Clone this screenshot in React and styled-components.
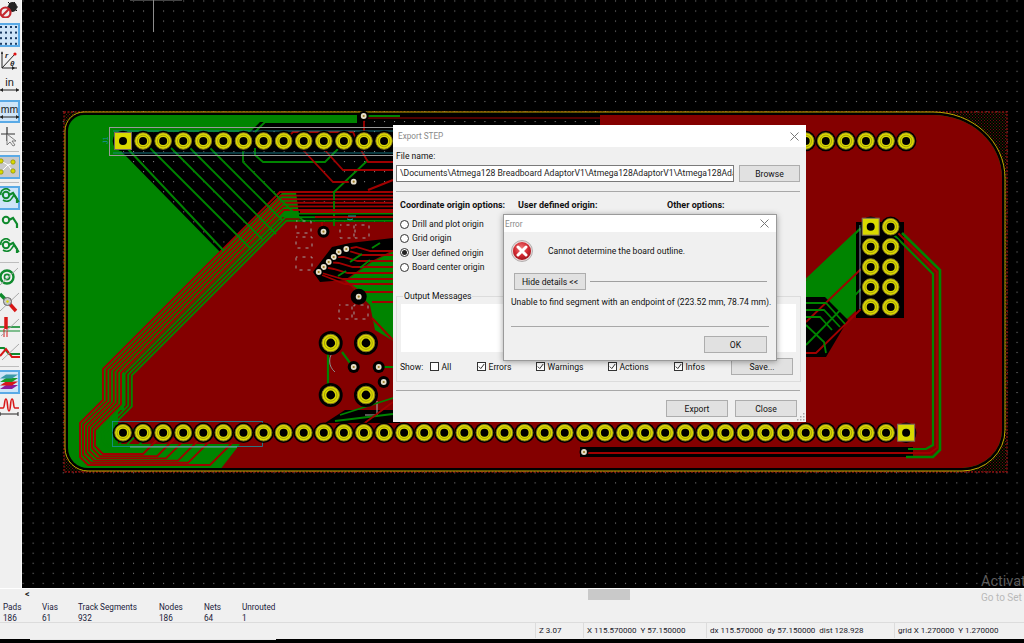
import React from "react";
import styled, { createGlobalStyle, css } from "styled-components";

const Global = createGlobalStyle`
  html, body { margin: 0; padding: 0; background: #000; overflow: hidden; }
  #root { width: 1024px; height: 643px; }
`;
const FONT = `Roboto, "Noto Sans", sans-serif`;

const Page = styled.div`
  position: relative; width: 1024px; height: 643px; overflow: hidden;
  display: flex; flex-direction: column; background: #000;
  font-family: ${FONT}; font-size: 8.6px; color: #111;
`;
const Main = styled.div`display: flex; height: 588px; flex: none;`;
const Toolbar = styled.div`
  width: 21px; flex: none; background: #f0f0f0; border-right: 1px solid #fafafa;
  display: flex; flex-direction: column; overflow: hidden;
`;
const Tool = styled.div`
  box-sizing: border-box; width: 23px; margin-left: -3px; flex: none;
  height: ${p => p.$h}px; margin-top: ${p => p.$gap || 0}px;
  display: flex; align-items: center; justify-content: center;
  ${p => p.$on && css`background: #cfe5f8; border: 2px solid #5aaae6;`}
  svg { display: block; flex: none; }
`;
const ToolSep = styled.div`
  height: 1px; flex: none; background: #bdbdbd; margin: ${p => p.$gap}px 2px 0 0;
`;
const Board = styled.svg`display: block; flex: none;`;

const Bottom = styled.div`
  height: 50px; flex: none; background: #f0f0f0; border-top: 1px solid #fff;
  display: flex; flex-direction: column;
`;
const ScrollRow = styled.div`height: 11px; display: flex; flex: none;`;
const ScrollArrow = styled.span`
  margin-left: 25px; width: 6px; font-size: 9px; line-height: 10px; font-weight: 700; color: #222;
`;
const ScrollThumb = styled.div`margin-left: 557px; width: 42px; background: #c9c9c9;`;
const Stats = styled.div`
  height: 23px; flex: none; display: flex; padding-left: 3px; box-sizing: border-box;
  border-bottom: 1px solid #dcdcdc; font-size: 8.2px;
`;
const Stat = styled.div`
  width: ${p => p.$w}px; flex: none; display: flex; flex-direction: column;
  line-height: 11px; padding-top: 2px; color: #1a1a3a;
`;
const Status = styled.div`
  height: 15px; flex: none; display: flex; line-height: 16px; color: #1a1a2a;
  padding-left: 535px; font-size: 8px;
`;
const StatusCell = styled.div`
  width: ${p => p.$w}px; flex: none; box-sizing: border-box; padding-left: 3px;
  border-left: 1px solid #dcdcdc; white-space: pre;
`;
const Strip = styled.div`height: 4px; flex: none; background: #000;`;
const StripBar = styled.div`margin-left: 30px; width: 246px; height: 1px; background: #e8e8e8;`;

const Watermark = styled.div`
  position: absolute; left: 981px; top: 572px; white-space: nowrap; pointer-events: none;
`;
const WaterBig = styled.div`font-size: 14.5px; line-height: 19px; color: #5c5c5c;`;
const WaterSmall = styled.div`font-size: 10px; line-height: 14px; color: #b9b9b9;`;

const Win = styled.div`
  position: absolute; box-sizing: border-box; background: #f0f0f0;
  left: ${p => p.$x}px; top: ${p => p.$y}px; width: ${p => p.$w}px; height: ${p => p.$h}px;
  display: flex; flex-direction: column;
  ${p => p.$top && css`border: 1px solid #9a9a9a; box-shadow: 0 1px 6px rgba(0,0,0,.35);`}
`;
const Title = styled.div`
  height: ${p => p.$h}px; flex: none; background: #fff; display: flex; align-items: center;
  justify-content: space-between; padding: 0 ${p => p.$r}px 0 ${p => p.$l}px;
  color: #8a8a8a; font-size: 8.2px;
`;
const Body = styled.div`
  flex: 1; display: flex; flex-direction: column; padding: 0 6px 0 3px; position: relative;
`;
const FileLabel = styled.div`height: 12px; line-height: 12px; margin-top: 3px;`;
const FileRow = styled.div`display: flex; gap: 5px; margin-top: 3px; height: 17px;`;
const FileInput = styled.div`
  flex: 1; min-width: 0; box-sizing: border-box; background: #fff; border: 1px solid #7a7a7a; line-height: 15px;
  padding-left: 3px; overflow: hidden; white-space: nowrap; color: #222;
`;
const Btn = styled.div`
  box-sizing: border-box; flex: none; width: ${p => p.$w}px; height: ${p => p.$h || 17}px;
  background: #e1e1e1; border: 1px solid #adadad; display: flex; align-items: center;
  justify-content: center; color: #111; white-space: nowrap;
`;
const Rule = styled.div`height: 1px; background: #a8a8a8; margin-top: ${p => p.$gap}px;`;
const Options = styled.div`
  display: grid; grid-template-columns: 118px 149px 1fr; margin: 7px 0 0 1px; padding-left: 3px;
`;
const Heading = styled.div`
  font-size: 9px; font-weight: 700; line-height: 12px; height: 12px; white-space: nowrap;
`;
const Radios = styled.div`display: flex; flex-direction: column; margin-top: 6px;`;
const RadioRow = styled.div`
  height: 14.3px; display: flex; align-items: center; gap: 3px; white-space: nowrap;
`;
const RadioDot = styled.span`
  box-sizing: border-box; width: 9px; height: 9px; border-radius: 50%; border: 1px solid #333;
  background: #fff; flex: none; display: flex; align-items: center; justify-content: center;
  ${p => p.$on && css`&::after { content: ""; width: 5px; height: 5px; border-radius: 50%; background: #222; }`}
`;
const OtherRow = styled.div`height: 14.3px; line-height: 14.3px; margin-top: 6px; white-space: nowrap;`;
const Group = styled.div`
  position: relative; box-sizing: border-box; height: 86px; margin-top: 22px; width: 405px;
  border: 1px solid #dcdcdc; padding: 7px 4px 0;
`;
const GroupCaption = styled.span`
  position: absolute; left: 6px; top: -6px; line-height: 11px; background: #f0f0f0; padding: 0 1px;
`;
const Messages = styled.div`height: 48px; background: #fff;`;
const ShowRow = styled.div`
  display: grid; grid-template-columns: 30px 47px 59px 72px 66px 57px 62px;
  align-items: center; margin: 6px 0 0 -1px; height: 17px;
`;
const Check = styled.span`display: flex; align-items: center; gap: 2.5px; white-space: nowrap;`;
const Box = styled.span`
  box-sizing: border-box; width: 9px; height: 9px; flex: none; background: #fff;
  border: 1px solid #333; display: flex;
  svg { display: block; }
`;
const Actions = styled.div`
  display: flex; justify-content: flex-end; gap: 7px; padding-right: 3px; margin-top: 9px;
`;
const Grip = styled.svg`position: absolute; right: 1px; bottom: 1px;`;
const ErrBody = styled.div`
  flex: 1; display: flex; flex-direction: column; padding: 8px 7px 0 7px;
`;
const ErrMsg = styled.div`display: flex; align-items: center; gap: 15px; height: 22px;`;
const HideRow = styled.div`display: flex; align-items: center; gap: 4px; margin: 11px 2px 0 3px;`;
const HideLine = styled.div`flex: 1; height: 1px; background: #a0a0a0;`;
const Detail = styled.div`margin-top: 6px; line-height: 12px; height: 12px; white-space: nowrap;`;
const OkRow = styled.div`display: flex; justify-content: flex-end; margin: 9px 2px 0 0;`;

const Close = () => (
  <svg width="9" height="9" viewBox="0 0 9 9"><path d="M.5.5l8 8M8.5.5l-8 8" stroke="#777" fill="none" /></svg>
);
const Tick = () => (
  <svg width="7" height="7" viewBox="0 0 7 7"><path d="M.8 3.6l2 2 3.4-4.6" stroke="#333" fill="none" /></svg>
);

/* ---------- toolbar icons ---------- */
const I = ({ h = 24, w = 24, children }) => <svg width={w} height={h} viewBox={`0 0 ${w} ${h}`}>{children}</svg>;
const IcoBug = () => (
  <I h={18}>
    <path d="M11 2l2 2h3l2-2M10 7h3M18 7h3M11 11l2-2M18 9l2 2" stroke="#111" fill="none" />
    <ellipse cx="15.5" cy="7" rx="4.5" ry="5" fill="#222" />
    <circle cx="8.5" cy="12.5" r="5" fill="#eee" stroke="#c4262e" strokeWidth="2.2" />
    <path d="M5 16l7-7" stroke="#c4262e" strokeWidth="2.2" />
  </I>
);
const IcoGrid = () => (
  <I w={20} h={20}>
    {[0, 1, 2, 3].map(r => [0, 1, 2, 3].map(c => (
      <rect key={r + "-" + c} x={1 + c * 5} y={1 + r * 5.6} width="2" height="2" fill="#1c3c64" />
    )))}
  </I>
);
const IcoPolar = () => (
  <I h={22}>
    <path d="M5 3v16h15M5 19L18 5" stroke="#222" fill="none" />
    <path d="M18 19l-3-2v4zM5 2l-1 3h2z" fill="#222" />
    <circle cx="18" cy="5" r="1.6" fill="#e01010" />
    <text x="8" y="9" fontFamily="Liberation Sans" fontSize="8" fontStyle="italic" fontWeight="700" fill="#222">r</text>
    <text x="13" y="17" fontFamily="Liberation Sans" fontSize="8" fontStyle="italic" fontWeight="700" fill="#222">θ</text>
  </I>
);
const IcoUnit = ({ t, fs = 11 }) => (
  <I h={16}>
    <text x="12.5" y="9" textAnchor="middle" fontFamily="Liberation Sans" fontSize={fs} fill="#222">{t}</text>
    <path d="M3 13h19" stroke="#222" />
    <path d="M3 13l3-2v4zM22 13l-3-2v4z" fill="#222" />
  </I>
);
const IcoCursor = () => (
  <I h={21}>
    <path d="M4 8h14M10 1v14" stroke="#333" strokeWidth="1.2" />
    <path d="M10 8l0 11 3-3 3 4 2-1-3-4h4z" fill="#eee" stroke="#666" strokeWidth=".8" />
  </I>
);
const IcoRats = () => (
  <I w={20} h={20}>
    <rect width="20" height="20" fill="#c9c9c9" />
    <path d="M2 4l7 4 5-2M2 15l7-7 5 7" stroke="#fff" fill="none" />
    {[[2, 4], [2, 15], [14, 5], [14, 14]].map(([x, y]) => (
      <circle key={x + "" + y} cx={x} cy={y} r="2.2" fill="#d9d900" stroke="#7a7a00" strokeWidth=".6" />
    ))}
  </I>
);
const IcoTrack = ({ ring }) => (
  <I h={20}>
    <circle cx="9" cy="7" r="3.2" fill="none" stroke="#0f8a2d" strokeWidth="2" />
    <path d="M12 7l4-2 4 6v4" stroke="#0f8a2d" strokeWidth="2.2" fill="none" />
    {ring && <path d="M6 12a6 6 0 0 0 9-2l2-3 5 7" stroke="#0f8a2d" strokeWidth="1.6" fill="none" />}
    {ring && <path d="M4 7a5 5 0 0 1 9-4" stroke="#0f8a2d" strokeWidth="1.6" fill="none" />}
  </I>
);
const IcoTarget = () => (
  <I h={20}>
    <circle cx="10" cy="10" r="6.5" fill="none" stroke="#0f8a2d" strokeWidth="2.4" />
    <circle cx="10" cy="10" r="2.6" fill="none" stroke="#0f8a2d" strokeWidth="1.6" />
    <path d="M3 18L21 1" stroke="#aaa" />
  </I>
);
const IcoVia = () => (
  <I h={23}>
    <path d="M3 21L22 3" stroke="#aaa" />
    <path d="M3 4l7 7" stroke="#0f8a2d" strokeWidth="3.4" />
    <path d="M11 12l8 9" stroke="#d81818" strokeWidth="3.4" />
    <circle cx="10.5" cy="11.5" r="4" fill="#c8c8c8" stroke="#666" />
    <circle cx="10.5" cy="11.5" r="1.2" fill="#d9d900" />
  </I>
);
const IcoCross = () => (
  <I h={22}>
    <path d="M3 11h20" stroke="#0f8a2d" strokeWidth="1.6" />
    <path d="M3 15h20" stroke="#0f8a2d" strokeWidth="1" />
    <path d="M9 1v12" stroke="#d81818" strokeWidth="3.5" />
    <path d="M7 13v8M10 13v8" stroke="#d81818" strokeWidth="1" />
    <path d="M4 20L22 3" stroke="#aaa" />
  </I>
);
const IcoZig = () => (
  <I h={20}>
    <path d="M3 7l4 0 5 6h11" stroke="#0f8a2d" strokeWidth="2" fill="none" />
    <path d="M3 15l6-7 6 8h8" stroke="#d81818" strokeWidth="2" fill="none" />
    <path d="M5 19L22 3" stroke="#aaa" />
  </I>
);
const IcoLayers = () => (
  <I w={20} h={20}>
    <path d="M1 17l6-4h12l-6 4z" fill="#8a1a9a" />
    <path d="M1 13.5l6-4h12l-6 4z" fill="#d81818" />
    <path d="M1 10l6-4h12l-6 4z" fill="#1a9a2a" />
    <path d="M1 6.5l6-4h12l-6 4z" fill="#3a9aa8" />
  </I>
);
const IcoWave = () => (
  <I h={20}>
    <path d="M3 12h3c2 0 1-9 3-9s1 12 3 12 1-12 3-12 1 9 3 9h4" stroke="#d81818" strokeWidth="1.6" fill="none" />
    <path d="M3 18h18M3 16v4M21 16v4" stroke="#222" />
  </I>
);

/* ---------- board ---------- */
const pitch = 20.08;
const topRow = Array.from({ length: 40 }, (_, i) => 123 + i * pitch);
const headerPads = [226.7, 246.8, 267, 287, 307];
const bus = Array.from({ length: 9 }, (_, i) => {
  const yH = 192 + i * 3.6;
  const xH = 280 + i * 0.8;
  const xV = 103 + i * 3.6;
  const yV = yH + (xH - xV);
  const yK = 400 + i * 0.8;
  const xL = 80 + i * 3;
  const yL = yK + (xV - xL);
  const yEnd = 465 - i * 2.2;
  const xEnd = [210, 188, 178, 166, 157, 143, 132, 122, 116][i];
  const yLow = yEnd - (xL + 8 < xEnd ? 8 : 0);
  return [[400, yH], [xH, yH], [xV, yV], [xV, yK], [xL, yL], [xL, yLow], [xL + 8, yEnd], [xEnd, yEnd], [xEnd + 22, yEnd - 22]];
});
const pts = a => a.map(p => p.join(",")).join(" ");

const outline = "M84 115H933A69 63 0 0 1 1002 178V430A40 38 0 0 1 962 468H88A20 20 0 0 1 68 448V131A16 16 0 0 1 84 115Z";
const edge = "M84 112H933A72 66 0 0 1 1005 178V430A43 41 0 0 1 962 471H88A23 23 0 0 1 65 448V131A19 19 0 0 1 84 112Z";

const RED = "#840000";
const TR = "#a00000";
const GR = "#008400";

const Track = ({ p, c = GR, w = 1.8 }) => <polyline points={pts(p)} fill="none" stroke={c} strokeWidth={w} strokeLinejoin="miter" />;

const Pad = ({ x, y, big, sq }) => {
  const halo = big ? 12 : 10.3;
  const ring = big ? 8.8 : 8.3;
  const hole = big ? 4.4 : 4;
  return (
    <g>
      <circle cx={x} cy={y} r={halo} fill="#000" />
      {sq
        ? <rect x={x - 8.5} y={y - 8.5} width="17" height="17" fill="#d9d900" stroke="#7a6a60" />
        : <circle cx={x} cy={y} r={ring} fill="#d9d900" stroke="#8a7a20" strokeWidth=".9" />}
      {!sq && <circle cx={x} cy={y} r={ring - 2.5} fill="none" stroke="#8a7a10" strokeWidth=".6" />}
      <circle cx={x} cy={y} r={hole} fill="#000" />
    </g>
  );
};
const Via = ({ x, y, halo = 6 }) => (
  <g>
    <circle cx={x} cy={y} r={halo} fill="#000" />
    <circle cx={x} cy={y} r="2.9" fill="#e4dcc8" />
    <circle cx={x} cy={y} r="1.1" fill="#9a7a20" />
  </g>
);
const Smd = ({ x, y, w, h }) => (
  <g fill="none">
    <rect x={x + 2} y={y + 2} width={w - 4} height={h - 4} stroke="#7a2a8a" strokeWidth=".8" />
    <rect x={x} y={y} width={w} height={h} stroke="#a0a0a0" strokeWidth="1" strokeDasharray="3 5" strokeDashoffset="1.5" />
  </g>
);

const viaChain = [[346.3, 249], [338.7, 252], [333.7, 257], [328.7, 262], [323.7, 267], [318.7, 272]];

const Pcb = () => (
  <Board width="1002" height="588" viewBox="22 0 1002 588">
    <defs>
      <pattern id="grid" patternUnits="userSpaceOnUse" width="10.04" height="10.04" x="2.5" y="0.5">
        <rect width="10.04" height="10.04" fill="#000" />
        <rect width="1" height="1" fill="#8e8e8e" />
      </pattern>
      <pattern id="stip" patternUnits="userSpaceOnUse" width="3" height="3">
        <rect width="3" height="3" fill="#000" />
        <rect width="1" height="1" fill="#6a1010" />
        <rect x="1.5" y="1.5" width="1" height="1" fill="#4a4a00" />
      </pattern>
      <clipPath id="board"><path d={outline} /></clipPath>
    </defs>
    <rect x="22" width="1002" height="588" fill="url(#grid)" />
    <path d="M130 .5H182" stroke="#444" />
    <path d="M153.5 0V32" stroke="#8c8c8c" />
    <rect x="64" y="112" width="943" height="360" fill="url(#stip)" />
    <rect x="64" y="112" width="943" height="360" fill="none" stroke="#8a1010" strokeWidth="1.4" strokeDasharray="2 1.5" />
    <path d={edge} fill="#000" />
    <path d={edge} fill="none" stroke="#c0aa00" strokeWidth="1" />

    <g clipPath="url(#board)">
      <rect x="60" y="110" width="960" height="365" fill={GR} />
      <polygon fill={RED} points="600,110 1010,110 1010,475 216,475 240,444 118,444 118,410 124,410 124,372 279,217 400,217 400,110 600,110" />
      <polygon fill="url(#grid)" points="115,132 250,132 260,122 357,122 357,112 600,112 600,126 400,126 400,192 283,192 220,252 122,152" />
      <polygon fill="url(#grid)" points="296,192 400,192 400,222 300,222" />
      <polygon fill="#000" points="313,272 332,247 350,243 393,238 393,250 370,262 345,280 320,282" />
      <polygon fill={GR} points="345,281 372,262 400,248 400,345 375,330 370,305 355,290" />
      <polygon fill="#000" points="325,423 400,423 400,410 345,410" />
      {/* right side */}
      <polygon fill={GR} points="862,227 805,282 805,345 848,318 862,305" />
      <polygon fill="#000" points="805,297 825,297 848,320 826,357 805,357" />
      <polygon fill="#000" points="856,222 904,222 904,318 856,318" />
      <polygon fill="#000" points="580,447 913,447 913,457 580,457" />
    </g>

    {/* bus */}
    {bus.map((p, i) => <Track key={i} p={p} c={i < 6 ? TR : GR} w={1.9} />)}

    {/* green tracks from top row */}
    <Track p={[[127, 148], [224, 251]]} w={2} />
    {[[150, 100], [171, 91], [190, 86], [210, 72]].map(([x, k]) => (
      <Track key={x} p={[[x, 148], [x + k, 148 + k]]} />
    ))}
    <Track p={[[243, 148], [243, 162], [293, 212], [305, 222]]} />
    <Track p={[[255, 132], [265, 122], [357, 122]]} />
    <Track p={[[255, 148], [255, 155], [263, 162], [325, 162], [338, 149]]} />
    <Track p={[[333, 193], [368, 160]]} />
    <line x1="334" y1="192" x2="334" y2="226" stroke={GR} strokeWidth="1.8" strokeDasharray="8 1" />
    <Track c={TR} p={[[290, 135], [293, 132], [353, 132], [360, 148], [368, 162], [400, 162]]} />
    <Track c={TR} p={[[303, 150], [333, 182], [353, 182]]} />
    <Track c={TR} p={[[323, 148], [343, 170], [400, 170]]} />
    <Track c={TR} p={[[364, 116], [364, 135]]} />
    <Track p={[[364, 116], [400, 116]]} />
    <Track c={TR} p={[[360, 118], [600, 118]]} w={1} />
    <Track c={TR} p={[[300, 212], [400, 212]]} />
    <Track c={TR} p={[[315, 217], [400, 217]]} />
    <Track c={TR} p={[[322, 222], [322, 232]]} />
    <Track c={TR} w={2.2} p={[[368, 190], [393, 180]]} />

    {/* centre parts */}
    <Smd x="296" y="221" w="15" h="12" />
    <Smd x="296" y="237" w="16" h="11" />
    <Smd x="296" y="257" w="16" h="13" />
    <Smd x="340" y="225" w="14" h="13" />
    <Smd x="355" y="225" w="14" h="13" />
    <Smd x="339" y="305" w="13" h="14" />
    <Smd x="354" y="305" w="14" h="14" />
    <path d="M347 219a6 6 0 0 0 6 0" stroke="#1aa0a0" fill="none" />
    <path d="M348 216h8" stroke="#1aa0a0" />
    {viaChain.map(([x, y], i) => (
      <Track key={i} c={TR} p={[[x, y], [x + 10, y - 2 + i], [x + 24, y + 2 + i], [400, y + 2 + i]]} />
    ))}
    <path d="M350 262l12-8M338 276l8-5M372 248l8-5M360 268l10-8" stroke={GR} strokeWidth="2" />
    <Track c={TR} p={[[322, 275], [345, 284], [400, 284]]} />
    <Track c={TR} p={[[345, 281], [360, 292], [400, 292]]} />
    <Track c={TR} p={[[372, 302], [400, 302]]} w={2} />
    <Track c={TR} p={[[372, 318], [393, 340]]} w={2} />
    <Track p={[[328, 354], [328, 384]]} w={2.2} />
    <Track p={[[342, 352], [353, 367]]} w={2.2} />
    <path d="M335 372a14 14 0 0 1 0-22" stroke="#8a8a8a" fill="none" />
    <path d="M378 367h16" stroke={GR} strokeWidth="2" />
    <path d="M365 415h12v-14" stroke="#b0b0b0" fill="none" />
    <Track p={[[335, 421], [393, 414]]} />
    <Track p={[[340, 415], [393, 398]]} />
    <Track c={TR} p={[[362, 425], [393, 402]]} />

    {/* right side tracks */}
    <Track p={[[862, 227], [806, 280]]} w={2.4} />
    <Track c={TR} p={[[862, 268], [806, 322]]} />
    <Track p={[[862, 288], [806, 345]]} />
    <Track c={TR} p={[[862, 308], [816, 353], [806, 353]]} />
    <Track p={[[806, 303], [826, 303], [845, 324]]} />
    <Track p={[[806, 310], [824, 310], [840, 327]]} />
    <Track p={[[806, 317], [820, 317], [832, 330]]} />
    <Track p={[[806, 325], [824, 342], [826, 353]]} />
    <Track p={[[902, 233], [940, 270], [940, 450], [933, 457], [906, 457]]} w={2.6} />
    <Track c={TR} p={[[898, 233], [937, 272], [937, 448], [930, 453], [584, 453]]} />
    <Track p={[[894, 235], [933, 274], [933, 445], [926, 449], [908, 449]]} w={2.2} />

    {/* silk */}
    <rect x="109.5" y="127.5" width="291" height="28" fill="none" stroke="#9a9a9a" />
    <path d="M113 131H400M113 153H400" stroke="#1a90a0" strokeWidth=".8" />
    <text x="108" y="144" transform="rotate(-90 108 144)" fontSize="7" fontFamily="Liberation Sans" fill="#1a90a0">J1</text>
    <rect x="112.5" y="421.5" width="150" height="25" fill="none" stroke="#1a90a0" strokeWidth=".8" />
    <path d="M130 447H237M860 225v84" stroke="#7fa0a0" />

    {/* pads */}
    {topRow.map((x, i) => <Pad key={"t" + i} x={x} y={141} sq={i === 0} />)}
    {topRow.map((x, i) => <Pad key={"b" + i} x={x} y={432.7} sq={i === 39} />)}
    {headerPads.map((y, i) => (
      <g key={i}>
        <Pad x={870.7} y={y} sq={i === 0} />
        <Pad x={890.7} y={y} />
      </g>
    ))}
    {[[330.7, 343], [366, 343], [330.7, 395], [366, 395]].map(([x, y]) => <Pad key={x + "" + y} x={x} y={y} big />)}

    {/* vias */}
    <Via x={363.7} y={116} halo={5} />
    <Via x={353.7} y={181.7} halo={5} />
    <Via x={323.5} y={231.7} />
    {viaChain.map(([x, y]) => <Via key={x} x={x} y={y} halo={4.5} />)}
    <Via x={358.7} y={296.7} halo={8} />
    <Via x={353.7} y={367} />
    <Via x={378.7} y={367} />
    <Via x={383.7} y={382} />
    <Via x={584} y={452} halo={4.5} />
  </Board>
);

const ErrorIcon = () => (
  <svg width="22" height="22" viewBox="0 0 22 22">
    <defs>
      <radialGradient id="eg" cx=".45" cy=".35" r=".7">
        <stop offset="0" stopColor="#f08080" />
        <stop offset=".55" stopColor="#d22a32" />
        <stop offset="1" stopColor="#9a0f18" />
      </radialGradient>
    </defs>
    <circle cx="11" cy="11" r="10.5" fill="#e8d8d8" stroke="#999" strokeWidth=".7" />
    <circle cx="11" cy="11" r="9" fill="url(#eg)" />
    <path d="M7 7l8 8M15 7l-8 8" stroke="#fff" strokeWidth="3" strokeLinecap="round" />
  </svg>
);

const stats = [
  ["Pads", "186", 39], ["Vias", "61", 36], ["Track Segments", "932", 81],
  ["Nodes", "186", 45], ["Nets", "64", 38], ["Unrouted", "1", 60],
];
const origins = [["Drill and plot origin"], ["Grid origin"], ["User defined origin", true], ["Board center origin"]];
const shows = [["All", false], ["Errors", true], ["Warnings", true], ["Actions", true], ["Infos", true]];

export default function App() {
  return (
    <Page>
      <Global />
      <Main>
        <Toolbar>
          <Tool $h={18}><IcoBug /></Tool>
          <Tool $h={24} $gap={5} $on><IcoGrid /></Tool>
          <Tool $h={22} $gap={2}><IcoPolar /></Tool>
          <Tool $h={16} $gap={6}><IcoUnit t="in" /></Tool>
          <Tool $h={23} $gap={7} $on><IcoUnit t="mm" fs={10.5} /></Tool>
          <Tool $h={21} $gap={3}><IcoCursor /></Tool>
          <ToolSep $gap={4} />
          <Tool $h={24} $gap={3} $on><IcoRats /></Tool>
          <ToolSep $gap={3} />
          <Tool $h={24} $gap={3} $on><IcoTrack ring /></Tool>
          <Tool $h={20} $gap={3}><IcoTrack /></Tool>
          <Tool $h={20} $gap={5}><IcoTrack ring /></Tool>
          <ToolSep $gap={4} />
          <Tool $h={20} $gap={4}><IcoTarget /></Tool>
          <Tool $h={23} $gap={3}><IcoVia /></Tool>
          <Tool $h={22} $gap={3}><IcoCross /></Tool>
          <Tool $h={20} $gap={3}><IcoZig /></Tool>
          <ToolSep $gap={5} />
          <Tool $h={24} $gap={3} $on><IcoLayers /></Tool>
          <Tool $h={20} $gap={2}><IcoWave /></Tool>
        </Toolbar>
        <Pcb />
      </Main>
      <Bottom>
        <ScrollRow>
          <ScrollArrow>&lt;</ScrollArrow>
          <ScrollThumb />
        </ScrollRow>
        <Stats>
          {stats.map(([k, v, w]) => (
            <Stat key={k} $w={w}><span>{k}</span><span>{v}</span></Stat>
          ))}
        </Stats>
        <Status>
          <StatusCell $w={48}>Z 3.07</StatusCell>
          <StatusCell $w={123}>X 115.570000  Y 57.150000</StatusCell>
          <StatusCell $w={188}>dx 115.570000  dy 57.150000  dist 128.928</StatusCell>
          <StatusCell $w={130}>grid X 1.270000  Y 1.270000</StatusCell>
        </Status>
      </Bottom>
      <Strip><StripBar /></Strip>

      <Win $x={393} $y={125} $w={413} $h={297}>
        <Title $h={22} $l={5} $r={7}>Export STEP<Close /></Title>
        <Body>
          <FileLabel>File name:</FileLabel>
          <FileRow>
            <FileInput>\Documents\Atmega128 Breadboard AdaptorV1\Atmega128AdaptorV1\Atmega128Ada</FileInput>
            <Btn $w={61}>Browse</Btn>
          </FileRow>
          <Rule $gap={9} />
          <Options>
            <div>
              <Heading>Coordinate origin options:</Heading>
              <Radios>
                {origins.map(([t, on]) => (
                  <RadioRow key={t}><RadioDot $on={on} />{t}</RadioRow>
                ))}
              </Radios>
            </div>
            <div><Heading>User defined origin:</Heading></div>
            <div>
              <Heading>Other options:</Heading>
              <OtherRow>Ignore virtual components</OtherRow>
            </div>
          </Options>
          <Group>
            <GroupCaption>Output Messages</GroupCaption>
            <Messages />
            <ShowRow>
              <span>Show:</span>
              {shows.map(([t, on]) => (
                <Check key={t}><Box>{on && <Tick />}</Box>{t}</Check>
              ))}
              <Btn $w={62}>Save...</Btn>
            </ShowRow>
          </Group>
          <Rule $gap={8} />
          <Actions>
            <Btn $w={62}>Export</Btn>
            <Btn $w={62}>Close</Btn>
          </Actions>
          <Grip width="8" height="8" viewBox="0 0 8 8" fill="#a8a8a8">
            <rect x="6" y="0" width="1.5" height="1.5" /><rect x="3" y="3" width="1.5" height="1.5" />
            <rect x="6" y="3" width="1.5" height="1.5" /><rect x="0" y="6" width="1.5" height="1.5" />
            <rect x="3" y="6" width="1.5" height="1.5" /><rect x="6" y="6" width="1.5" height="1.5" />
          </Grip>
        </Body>
      </Win>

      <Win $x={503} $y={214} $w={274} $h={147} $top>
        <Title $h={17} $l={1} $r={7}>Error<Close /></Title>
        <ErrBody>
          <ErrMsg><ErrorIcon />Cannot determine the board outline.</ErrMsg>
          <HideRow>
            <Btn $w={72}>Hide details &lt;&lt;</Btn>
            <HideLine />
          </HideRow>
          <Detail>Unable to find segment with an endpoint of (223.52 mm, 78.74 mm).</Detail>
          <Rule $gap={18} />
          <OkRow><Btn $w={63}>OK</Btn></OkRow>
        </ErrBody>
      </Win>

      <Watermark>
        <WaterBig>Activat</WaterBig>
        <WaterSmall>Go to Set</WaterSmall>
      </Watermark>
    </Page>
  );
}
